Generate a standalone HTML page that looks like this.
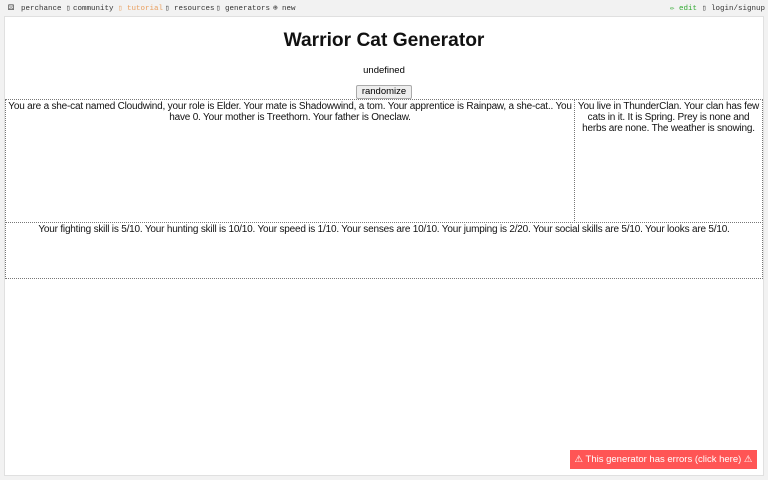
<!DOCTYPE html>
<html><head><meta charset="utf-8"><style>
body{margin:0;width:768px;height:480px;background:#f2f2f2;font-family:"Liberation Sans",sans-serif;position:relative;overflow:hidden}
.nav{position:absolute;top:1px;left:0;right:0;height:16px;font-family:"Liberation Mono",monospace;font-size:7.5px;color:#333;line-height:16px}
.nav span{position:absolute;top:0}
.main{position:absolute;left:4px;top:16px;width:758px;height:458px;background:#fff;border:1px solid #e0e0e0}
h1{position:absolute;left:0;right:0;top:30px;margin:0;text-align:center;font-size:19.2px;font-weight:bold;color:#111}
.und{position:absolute;left:0;right:0;top:65px;text-align:center;font-size:9.5px}
.btn{position:absolute;left:356px;top:85px;width:54px;height:12px;border:1px solid #aaa;background:#eee;border-radius:2px;font-size:9.5px;text-align:center;line-height:12px}
.box{position:absolute;border:1px dotted #777;font-size:10px;text-align:center;line-height:11px;letter-spacing:-0.2px;color:#111;box-sizing:border-box;padding:1px 1px 0}
.err{position:absolute;left:570px;top:450px;width:187px;height:19px;background:#f55;color:#fff;font-size:9.5px;line-height:19px;text-align:center}
</style></head><body>
<div class="nav">
<span style="left:8px;font-size:10px">⚄</span>
<span style="left:21px">perchance</span>
<span style="left:66px">▯</span>
<span style="left:73px">community</span>
<span style="left:118px;color:#e9a060">▯ tutorial</span>
<span style="left:165px">▯ resources</span>
<span style="left:216px">▯ generators</span>
<span style="left:273px">⊕ new</span>
<span style="left:670px;color:#3a3">✏ edit</span>
<span style="left:702px">▯ login/signup</span>
</div>
<div class="main"></div>
<h1>Warrior Cat Generator</h1>
<div class="und">undefined</div>
<div class="btn">randomize</div>
<div class="box" style="left:5px;top:99px;width:570px;height:124px">You are a she-cat named Cloudwind, your role is Elder. Your mate is Shadowwind, a tom. Your apprentice is Rainpaw, a she-cat.. You have 0. Your mother is Treethorn. Your father is Oneclaw.</div>
<div class="box" style="left:574px;top:99px;width:189px;height:124px">You live in ThunderClan. Your clan has few cats in it. It is Spring. Prey is none and herbs are none. The weather is snowing.</div>
<div class="box" style="left:5px;top:222px;width:758px;height:57px;padding-top:1px">Your fighting skill is 5/10. Your hunting skill is 10/10. Your speed is 1/10. Your senses are 10/10. Your jumping is 2/20. Your social skills are 5/10. Your looks are 5/10.</div>
<div class="err">⚠ This generator has errors (click here) ⚠</div>
</body></html>
